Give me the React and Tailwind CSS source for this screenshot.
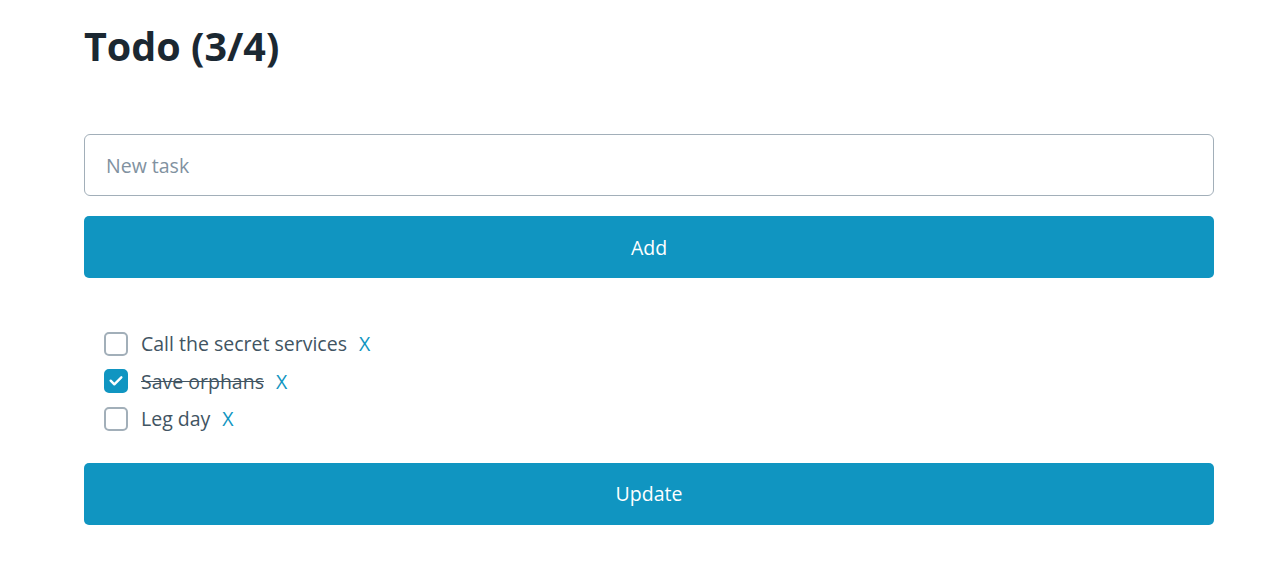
import { useState } from 'react'

const initialTodos = [
  { id: 1, title: 'Call the secret services', done: false },
  { id: 2, title: 'Save orphans', done: true },
  { id: 3, title: 'Leg day', done: false }
]

const Checkbox = ({ checked, onChange }) => (
  <button
    type="button"
    onClick={onChange}
    className={`flex items-center justify-center w-[24px] h-[24px] shrink-0 rounded-[5px] border-2 ${
      checked ? 'bg-[#1095c1] border-[#1095c1]' : 'bg-white border-[#a2afb9]'
    }`}
  >
    {checked && (
      <svg width="16" height="16" viewBox="0 0 24 24" fill="none" stroke="white" strokeWidth="3.6" strokeLinecap="round" strokeLinejoin="round">
        <polyline points="20 6.5 9.5 17 4 11.5" />
      </svg>
    )}
  </button>
)

export default function App() {
  const [todos, setTodos] = useState(initialTodos)
  const [task, setTask] = useState('')

  const toggle = (id) =>
    setTodos(todos.map((t) => (t.id === id ? { ...t, done: !t.done } : t)))

  return (
    <div className="min-h-screen bg-white font-['Open_Sans',sans-serif] text-[#415462]">
      <div className="ml-[84px] w-[1130px] pt-[19px]">
        {/* Header */}
        <h1 className="text-[39.5px] leading-[54px] font-bold text-[#1b2832]">Todo (3/4)</h1>

        {/* New task */}
        <input
          value={task}
          onChange={(e) => setTask(e.target.value)}
          placeholder="New task"
          className="mt-[61px] block w-full h-[62px] px-[21px] rounded-[6px] border border-[#a2afb9] text-[19.5px] text-[#415462] placeholder:text-[#8191a0] outline-none"
        />
        <button className="mt-[20px] block w-full h-[62px] rounded-[5px] bg-[#1095c1] text-white text-[19.5px] pt-[1px]">
          Add
        </button>

        {/* List */}
        <ul className="mt-[47px] pl-[20px]">
          {todos.map((t) => (
            <li key={t.id} className="flex items-center h-[37.5px]">
              <Checkbox checked={t.done} onChange={() => toggle(t.id)} />
              <span className={`ml-[13px] text-[19.5px] ${t.done ? 'line-through' : ''}`}>{t.title}</span>
              <span className="ml-[12px] text-[19.5px] text-[#1095c1] cursor-pointer">X</span>
            </li>
          ))}
        </ul>

        <button className="mt-[25px] block w-full h-[62px] rounded-[5px] bg-[#1095c1] text-white text-[19.5px] pt-[1px]">
          Update
        </button>
      </div>
    </div>
  )
}
